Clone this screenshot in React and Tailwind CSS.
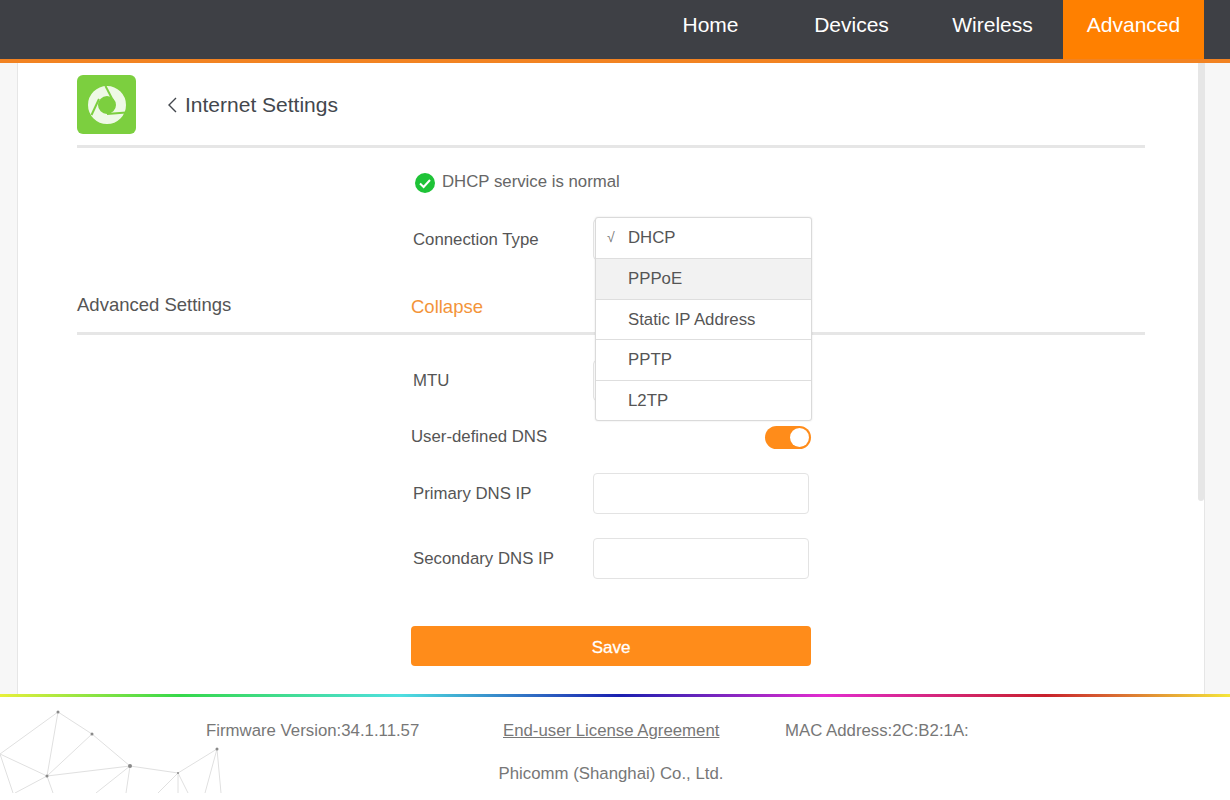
import React from 'react';

const NAV = ['Home', 'Devices', 'Wireless', 'Advanced'];
const OPTIONS = ['DHCP', 'PPPoE', 'Static IP Address', 'PPTP', 'L2TP'];

const Logo = () => (
  <div className="w-[59px] h-[59px] rounded-[6px] bg-[#7ccf3f] flex items-center justify-center flex-shrink-0">
    <svg width="38" height="38" viewBox="0 0 38 38">
      <circle cx="19" cy="19" r="14" fill="none" stroke="#eef9e6" strokeWidth="10" />
      <path d="M17.5 0 L26 16.5" stroke="#7ccf3f" strokeWidth="2" />
      <path d="M38 26.5 L19 28" stroke="#7ccf3f" strokeWidth="2" />
      <path d="M3.5 29 L11 13" stroke="#7ccf3f" strokeWidth="2" />
    </svg>
  </div>
);

const CheckBadge = () => (
  <svg width="20" height="20" viewBox="0 0 20 20" className="flex-shrink-0 mt-[2px]">
    <circle cx="10" cy="10" r="10" fill="#1ec337" />
    <path d="M5 10.5 L8.6 14 L15 7" fill="none" stroke="#fff" strokeWidth="2" />
  </svg>
);

// background mesh behind the footer
const FooterMesh = () => (
  <svg width="225" height="96" viewBox="0 0 225 96" className="absolute left-0 top-0">
    <g stroke="#e0e0e0" strokeWidth="1" fill="none">
      <path d="M0 57 L58 15 L47 79 L0 57" />
      <path d="M58 15 L92 37 L130 69 L47 79 L92 37" />
      <path d="M47 79 L15 96 M0 57 L13 96 M47 79 L53 96" />
      <path d="M130 69 L96 96 M130 69 L126 96 M130 69 L178 76 L217 52 L205 96 M217 52 L221 96" />
      <path d="M178 76 L158 96 M178 76 L178 96 M178 76 L188 96" />
    </g>
    <g fill="#8a8a8a">
      <circle cx="58" cy="15" r="1.5" />
      <circle cx="92" cy="37" r="1.5" />
      <circle cx="47" cy="79" r="1.5" />
      <circle cx="130" cy="69" r="2" />
      <circle cx="178" cy="76" r="1" />
      <circle cx="217" cy="52" r="1.5" />
    </g>
  </svg>
);

const Field = ({ label, className }) => (
  <div className={`flex items-center ${className}`}>
    <span className="w-[180px]">{label}</span>
    <div className="w-[216px] h-[41px] bg-white border border-[#e3e3e3] rounded-[4px]" />
  </div>
);

const App = () => {
  return (
    <div className="h-[800px] flex flex-col overflow-hidden bg-white text-[16.8px] text-[#555] font-['Liberation_Sans',Arial,sans-serif]">
      <header className="h-[63px] flex-shrink-0 bg-[#3e4045] border-b-[4px] border-[#f28322] flex justify-end pr-[26px]">
        {NAV.map((item) => (
          <div
            key={item}
            className={`w-[141px] h-[59px] pb-[9px] flex items-center justify-center text-[21px] text-white ${item === 'Advanced' ? 'bg-[#ff8000]' : ''}`}
          >
            {item}
          </div>
        ))}
      </header>

      <main className="flex-1 min-h-0 bg-[#f7f7f7] pl-[17px] pr-[25px]">
        <div className="relative h-full bg-white border-x border-[#e6e6e6] pl-[59px] pr-[59px]">
          <div className="absolute right-0 top-0 w-[6px] h-[438px] bg-[#e6e6e6] rounded-b-[3px]" />

          <div className="h-[85px] pt-[12px] flex items-start border-b-[3px] border-[#e6e6e6]">
            <Logo />
            <div className="h-[59px] flex items-center ml-[31px] text-[#43474d]">
              <svg width="10" height="16" viewBox="0 0 10 16" className="flex-shrink-0">
                <path d="M9 1 L2 8 L9 15" fill="none" stroke="#43474d" strokeWidth="1.4" />
              </svg>
              <span className="text-[21px] ml-[8px]">Internet Settings</span>
            </div>
          </div>

          <div className="pl-[336px]">
            <div className="h-[24px] mt-[22px] flex items-center pl-[2px] gap-[7px] text-[#666]">
              <CheckBadge />
              <span>DHCP service is normal</span>
            </div>

            <div className="relative mt-[24px] h-[42px]">
              <Field label="Connection Type" className="h-[43px]" />
              <ul className="absolute left-[182px] -top-[1px] z-10 w-[217px] bg-white border border-[#dadada] rounded-[3px] shadow-[0_0_2px_rgba(0,0,0,0.12)]">
                {OPTIONS.map((option, i) => (
                  <li
                    key={option}
                    className={`relative h-[40.4px] flex items-center pl-[32px] ${i > 0 ? 'border-t border-[#dedede]' : 'pb-[2px]'} ${option === 'PPPoE' ? 'bg-[#f2f2f2]' : ''}`}
                  >
                    {option === 'DHCP' && <span className="absolute left-[11px] text-[14px] text-[#777]">√</span>}
                    {option}
                  </li>
                ))}
              </ul>
            </div>
          </div>

          <div className="h-[75px] pt-[18px] flex items-center border-b-[3px] border-[#e6e6e6]">
            <span className="w-[334px] text-[18.5px]">Advanced Settings</span>
            <span className="mt-[3px] text-[18.5px] text-[#f39439]">Collapse</span>
          </div>

          <div className="pl-[334px] w-[735px]">
            <Field label="MTU" className="mt-[25px] pl-[2px]" />
            <div className="mt-[24px] h-[24px] w-[400px] flex items-center justify-between">
              <span>User-defined DNS</span>
              <div className="w-[46px] h-[23px] rounded-full bg-[#ff8c1a] flex items-center justify-end pr-[2px]">
                <div className="w-[19px] h-[19px] rounded-full bg-white" />
              </div>
            </div>
            <Field label="Primary DNS IP" className="mt-[24px] pl-[2px]" />
            <Field label="Secondary DNS IP" className="mt-[24px] pl-[2px]" />
            <button className="mt-[47px] w-[400px] h-[40px] pt-[3px] rounded-[4px] bg-[#ff8c1a] text-white text-[17px] [-webkit-text-stroke:0.3px_white]">Save</button>
          </div>
        </div>
      </main>

      <div className="h-[3px] flex-shrink-0 bg-[linear-gradient(90deg,#e8f03a_0%,#35d84a_14.6%,#4fe0e0_32.5%,#1a1fb0_50.4%,#e22ccf_67%,#c8202c_85%,#f5e63a_100%)]" />

      <footer className="relative h-[103px] flex-shrink-0 text-[#777]">
        <FooterMesh />
        <div className="relative flex pt-[21px] h-[64px]">
          <span className="ml-[206px] w-[297px]">Firmware Version:34.1.11.57</span>
          <span className="w-[282px] underline">End-user License Agreement</span>
          <span>MAC Address:2C:B2:1A:</span>
        </div>
        <div className="relative text-center -ml-[8px]">Phicomm (Shanghai) Co., Ltd.</div>
      </footer>
    </div>
  );
};

export default App;
